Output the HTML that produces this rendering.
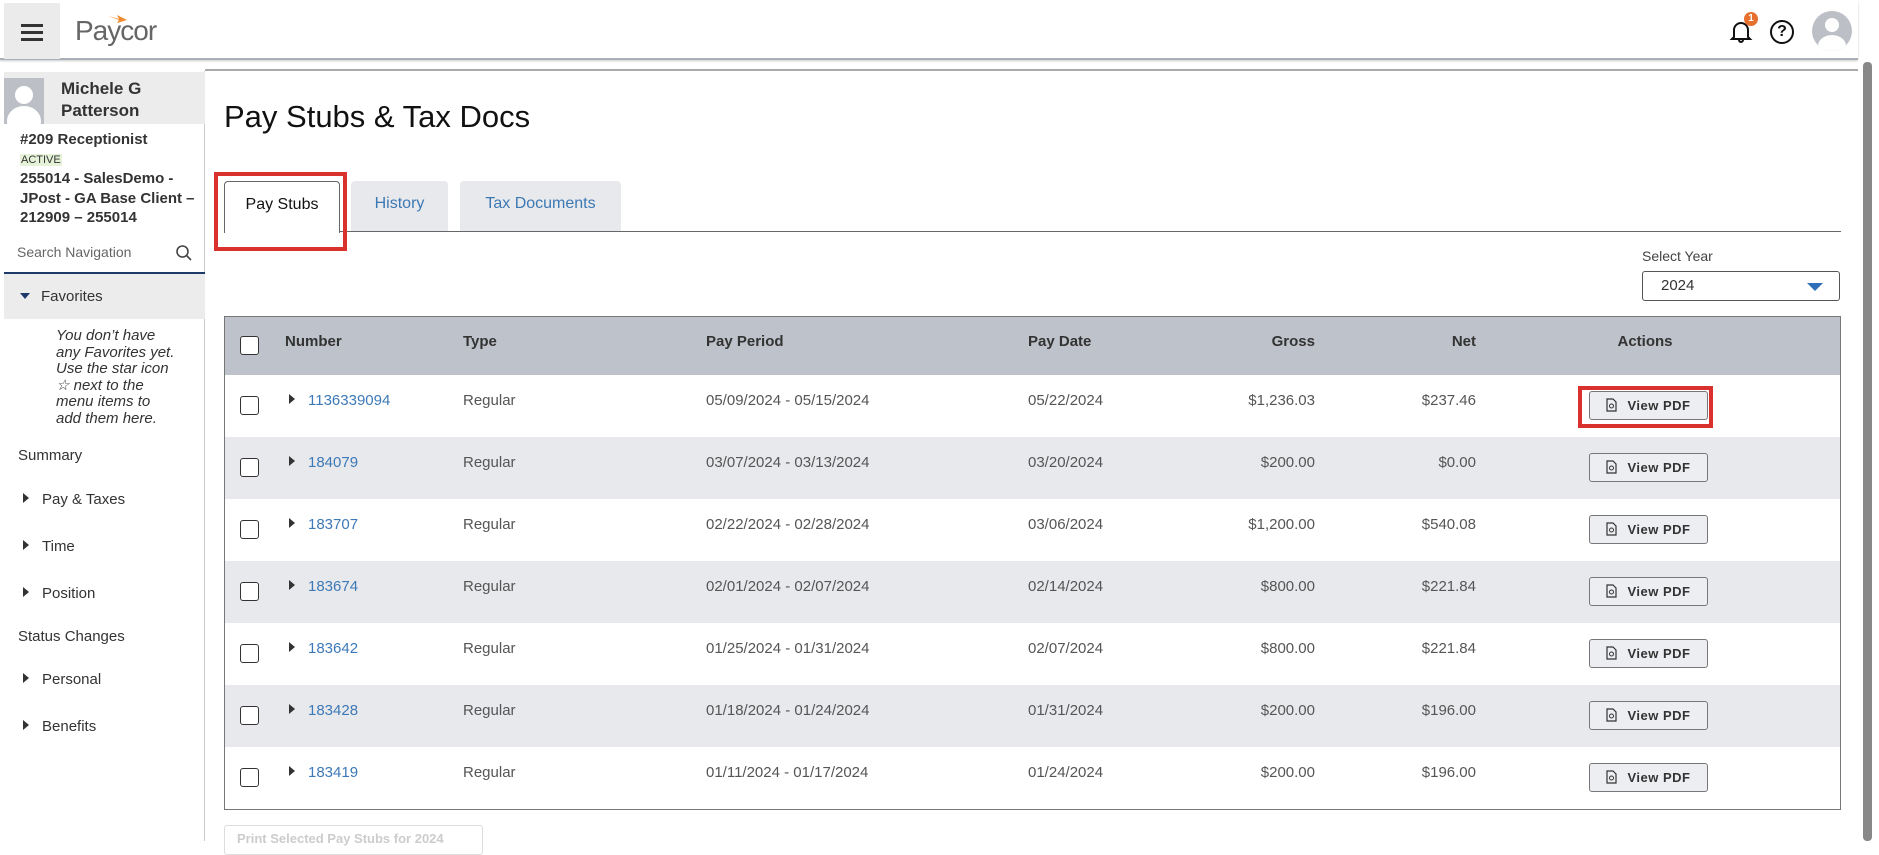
<!DOCTYPE html>
<html><head><meta charset="utf-8"><style>
*{box-sizing:border-box;margin:0;padding:0}
body{width:1879px;height:841px;overflow:hidden;background:#fff;font-family:"Liberation Sans",sans-serif;color:#333;position:relative}
.a{position:absolute;white-space:nowrap}
.hdr{left:0;top:0;width:1858px;height:60px;background:#fff;border-bottom:2px solid #aab0b8;box-shadow:0 1px 2px #ccc}
.ham{left:4px;top:3px;width:56px;height:56px;background:#ebebec}
.side{left:4px;top:71px;width:201px;height:770px;border-right:1px solid #ccc}
.nav{font-size:15px;color:#333}
.tri{display:inline-block;width:0;height:0;border-top:5px solid transparent;border-bottom:5px solid transparent;border-left:6px solid #333;margin-right:13px;vertical-align:1px}
.tab{top:181px;height:50px;background:#e8e9ec;border-radius:4px 4px 0 0;font-size:16px;color:#3c78b4;text-align:center;line-height:46px}
.row{left:225px;width:1615px;height:62px}
.cb{width:19px;height:19px;border:1.5px solid #333;border-radius:3px;background:#fff}
.t{font-size:15px;color:#555}
.lk{color:#3d79b6}
.btn{width:119px;height:29px;border:1px solid #777;border-radius:3px;background:#eceef1;font-size:13px;font-weight:bold;color:#333;letter-spacing:.5px;line-height:27px;text-align:center}
.th{font-size:15px;font-weight:bold;color:#333}
</style></head><body>
<div class="a hdr"></div>
<div class="a ham"><div class="a" style="left:17px;top:21px;width:22px;height:3px;background:#333"></div><div class="a" style="left:17px;top:28px;width:22px;height:3px;background:#333"></div><div class="a" style="left:17px;top:35px;width:22px;height:3px;background:#333"></div></div>
<div class="a" style="left:75px;top:15px;font-size:28px;color:#666;letter-spacing:-1px">Paycor</div>
<svg class="a" style="left:107px;top:14px" width="22" height="10"><path d="M1 2 L12 5 L10 1 L20 6 L10 9 L12 6 Z" fill="#f08a2c"/></svg>
<svg class="a" style="left:1728px;top:18px" width="26" height="26" viewBox="0 0 26 26"><path d="M6 19 V12 a7 7 0 0 1 14 0 V19 L22 21 H4 Z M11 22 a2 2 0 0 0 4 0" fill="none" stroke="#111" stroke-width="2"/></svg>
<div class="a" style="left:1744px;top:12px;width:14px;height:14px;border-radius:50%;background:#e8702e;color:#fff;font-size:10px;font-weight:bold;text-align:center;line-height:14px">1</div>
<div class="a" style="left:1770px;top:20px;width:24px;height:24px;border:2px solid #111;border-radius:50%;font-size:16px;font-weight:bold;text-align:center;line-height:20px;color:#111">?</div>
<div class="a" style="left:1812px;top:11px;width:40px;height:40px;border-radius:50%;background:#bcc0c6;overflow:hidden"><div class="a" style="left:13px;top:7px;width:14px;height:14px;border-radius:50%;background:#fff"></div><div class="a" style="left:6px;top:24px;width:28px;height:22px;border-radius:50%;background:#fff"></div></div>
<div class="a" style="left:205px;top:69px;width:1653px;height:2px;background:#aaa"></div>
<div class="a" style="left:1863px;top:62px;width:9px;height:779px;background:#888;border-radius:4px"></div>
<div class="a side"></div>
<div class="a" style="left:4px;top:72px;width:201px;height:52px;background:#ececec"></div>
<div class="a" style="left:4px;top:78px;width:40px;height:46px;background:#bcc0c6;overflow:hidden"><div class="a" style="left:11px;top:8px;width:18px;height:18px;border-radius:50%;background:#fff"></div><div class="a" style="left:3px;top:28px;width:34px;height:30px;border-radius:50%;background:#fff"></div></div>
<div class="a" style="left:61px;top:78px;font-size:17px;font-weight:bold;line-height:22px;color:#333">Michele G<br>Patterson</div>
<div class="a" style="left:20px;top:131px;font-size:15px;font-weight:bold">#209 Receptionist</div>
<div class="a" style="left:20px;top:154px;font-size:11px;background:#e6f2d8;color:#333;padding:0 1px">ACTIVE</div>
<div class="a" style="left:20px;top:169px;font-size:15px;font-weight:bold;line-height:19.5px">255014 - SalesDemo -<br>JPost - GA Base Client –<br>212909 – 255014</div>
<div class="a" style="left:17px;top:244px;font-size:14px;color:#666">Search Navigation</div>
<svg class="a" style="left:175px;top:244px" width="18" height="18"><circle cx="7.5" cy="7.5" r="5.5" fill="none" stroke="#444" stroke-width="1.6"/><path d="M11.5 11.5 L16 16" stroke="#444" stroke-width="1.6"/></svg>
<div class="a" style="left:4px;top:272px;width:201px;height:2px;background:#1e3a6a"></div>
<div class="a" style="left:4px;top:274px;width:201px;height:45px;background:#ececec"></div>
<div class="a nav" style="left:20px;top:288px"><span style="display:inline-block;border-left:5px solid transparent;border-right:5px solid transparent;border-top:6px solid #1e3a6a;margin-right:11px;vertical-align:2px"></span>Favorites</div>
<div class="a" style="left:56px;top:328px;font-size:15px;font-style:italic;line-height:16.5px;color:#333">You don’t have<br>any Favorites yet.<br>Use the star icon<br>☆ next to the<br>menu items to<br>add them here.</div>
<div class="a nav" style="left:18px;top:447px">Summary</div>
<div class="a nav" style="left:23px;top:491px"><span class="tri"></span>Pay &amp; Taxes</div>
<div class="a nav" style="left:23px;top:538px"><span class="tri"></span>Time</div>
<div class="a nav" style="left:23px;top:585px"><span class="tri"></span>Position</div>
<div class="a nav" style="left:18px;top:628px">Status Changes</div>
<div class="a nav" style="left:23px;top:671px"><span class="tri"></span>Personal</div>
<div class="a nav" style="left:23px;top:718px"><span class="tri"></span>Benefits</div>

<div class="a" style="left:224px;top:99px;font-size:31px;color:#111">Pay Stubs &amp; Tax Docs</div>
<div class="a" style="left:224px;top:231px;width:1617px;height:1px;background:#666"></div>
<div class="a tab" style="left:224px;width:116px;height:52px;background:#fff;border:1px solid #666;border-bottom:none;color:#111">Pay Stubs</div>
<div class="a tab" style="left:351px;width:97px">History</div>
<div class="a tab" style="left:460px;width:161px">Tax Documents</div>
<div class="a" style="left:214px;top:172px;width:133px;height:79px;border:4px solid #d9322e"></div>

<div class="a" style="left:1642px;top:248px;font-size:14px;color:#444">Select Year</div>
<div class="a" style="left:1642px;top:271px;width:198px;height:30px;border:1px solid #555;border-radius:3px"><div class="a" style="left:18px;top:5px;font-size:15px;color:#333">2024</div><div class="a" style="left:164px;top:11px;border-left:8px solid transparent;border-right:8px solid transparent;border-top:8px solid #2f6fb8"></div></div>

<div class="a" style="left:224px;top:316px;width:1617px;height:494px;border:1px solid #777"></div>
<div class="a row" style="top:317px;height:58px;background:#bec2ca"></div>
<div class="a cb" style="left:240px;top:336px"></div>
<div class="a th" style="left:285px;top:333px">Number</div>
<div class="a th" style="left:463px;top:333px">Type</div>
<div class="a th" style="left:706px;top:333px">Pay Period</div>
<div class="a th" style="left:1028px;top:333px">Pay Date</div>
<div class="a th" style="left:1215px;top:333px;width:100px;text-align:right">Gross</div>
<div class="a th" style="left:1376px;top:333px;width:100px;text-align:right">Net</div>
<div class="a th" style="left:1595px;top:333px;width:100px;text-align:center">Actions</div>

<div id="rows"></div>
<script>
var d=[["1136339094","05/09/2024 - 05/15/2024","05/22/2024","$1,236.03","$237.46"],["184079","03/07/2024 - 03/13/2024","03/20/2024","$200.00","$0.00"],["183707","02/22/2024 - 02/28/2024","03/06/2024","$1,200.00","$540.08"],["183674","02/01/2024 - 02/07/2024","02/14/2024","$800.00","$221.84"],["183642","01/25/2024 - 01/31/2024","02/07/2024","$800.00","$221.84"],["183428","01/18/2024 - 01/24/2024","01/31/2024","$200.00","$196.00"],["183419","01/11/2024 - 01/17/2024","01/24/2024","$200.00","$196.00"]];
var h="";
d.forEach(function(r,i){var y=375+i*62;
h+='<div class="a row" style="top:'+y+'px;background:'+(i%2?'#e8e9ec':'#fff')+'"></div>';
h+='<div class="a cb" style="left:240px;top:'+(y+21)+'px"></div>';
h+='<div class="a" style="left:289px;top:'+(y+19)+'px;border-top:5px solid transparent;border-bottom:5px solid transparent;border-left:6px solid #333"></div>';
h+='<div class="a t lk" style="left:308px;top:'+(y+17)+'px">'+r[0]+'</div>';
h+='<div class="a t" style="left:463px;top:'+(y+17)+'px">Regular</div>';
h+='<div class="a t" style="left:706px;top:'+(y+17)+'px">'+r[1]+'</div>';
h+='<div class="a t" style="left:1028px;top:'+(y+17)+'px">'+r[2]+'</div>';
h+='<div class="a t" style="left:1165px;top:'+(y+17)+'px;width:150px;text-align:right">'+r[3]+'</div>';
h+='<div class="a t" style="left:1326px;top:'+(y+17)+'px;width:150px;text-align:right">'+r[4]+'</div>';
h+='<div class="a btn" style="left:1589px;top:'+(y+16)+'px"><svg width="11" height="14" style="vertical-align:-2px;margin-right:10px"><path d="M1 1 H7 L10 4 V13 H1 Z" fill="none" stroke="#333" stroke-width="1.2"/><circle cx="5.5" cy="8" r="2" fill="none" stroke="#333"/></svg>View PDF</div>';
});
document.getElementById("rows").innerHTML=h;
</script>
<div class="a" style="left:1578px;top:386px;width:135px;height:42px;border:4px solid #d9322e"></div>
<div class="a" style="left:224px;top:825px;width:259px;height:30px;border:1px solid #ddd;border-radius:3px;font-size:13px;font-weight:bold;color:#ccc;padding:5px 12px">Print Selected Pay Stubs for 2024</div>
</body></html>
